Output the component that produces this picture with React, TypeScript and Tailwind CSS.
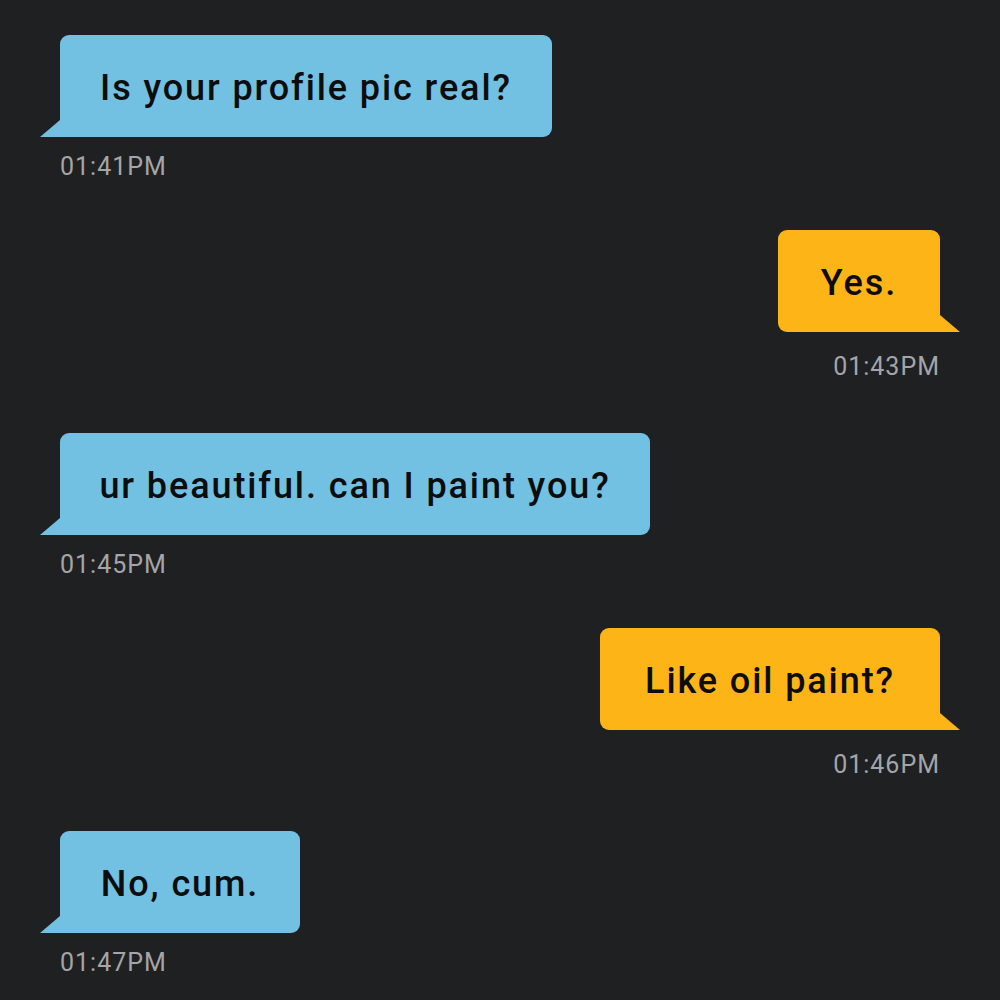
const messages = [
  { from: "them", text: "Is your profile pic real?", time: "01:41PM", w: "w-[492px]" },
  { from: "me", text: "Yes.", time: "01:43PM", w: "w-[162px]" },
  { from: "them", text: "ur beautiful. can I paint you?", time: "01:45PM", w: "w-[590px]" },
  { from: "me", text: "Like oil paint?", time: "01:46PM", w: "w-[340px]" },
  { from: "them", text: "No, cum.", time: "01:47PM", w: "w-[240px]" },
];

const Bubble = ({ from, text, time, w }: { from: string; text: string; time: string; w: string }) => {
  const mine = from === "me";
  return (
    <div className={mine ? "h-[203px] shrink-0 flex flex-col items-end" : "h-[195px] shrink-0 flex flex-col items-start"}>
      <div
        className={
          (mine
            ? "relative h-[102px] flex items-center justify-center bg-[#fdb417] rounded-[9px] rounded-br-none "
            : "relative h-[102px] flex items-center justify-center bg-[#72c0e2] rounded-[9px] rounded-bl-none ") + w
        }
      >
        <span className="pt-[4px] text-[36px] font-medium tracking-[1.9px] text-[#0d0d0d] leading-none whitespace-nowrap">
          {text}
        </span>
        {mine ? (
          <span className="absolute right-[-20px] bottom-0 w-[20px] h-[17px] bg-[#fdb417] [clip-path:polygon(0_0,100%_100%,0_100%)]" />
        ) : (
          <span className="absolute left-[-20px] bottom-0 w-[20px] h-[17px] bg-[#72c0e2] [clip-path:polygon(100%_0,100%_100%,0_100%)]" />
        )}
      </div>
      <div
        className={
          mine
            ? "mt-[21px] text-[25px] leading-[28px] tracking-[1px] text-[#a4a5a8]"
            : "mt-[16px] text-[25px] leading-[28px] tracking-[1px] text-[#a4a5a8]"
        }
      >
        {time}
      </div>
    </div>
  );
};

export default function App() {
  return (
    <div
      className="w-[1000px] h-[1000px] bg-[#1f2022] px-[60px] pt-[35px] flex flex-col overflow-hidden"
      style={{ fontFamily: 'Roboto, "DejaVu Sans", sans-serif' }}
    >
      {messages.map((m, i) => (
        <Bubble key={i} {...m} />
      ))}
    </div>
  );
}
